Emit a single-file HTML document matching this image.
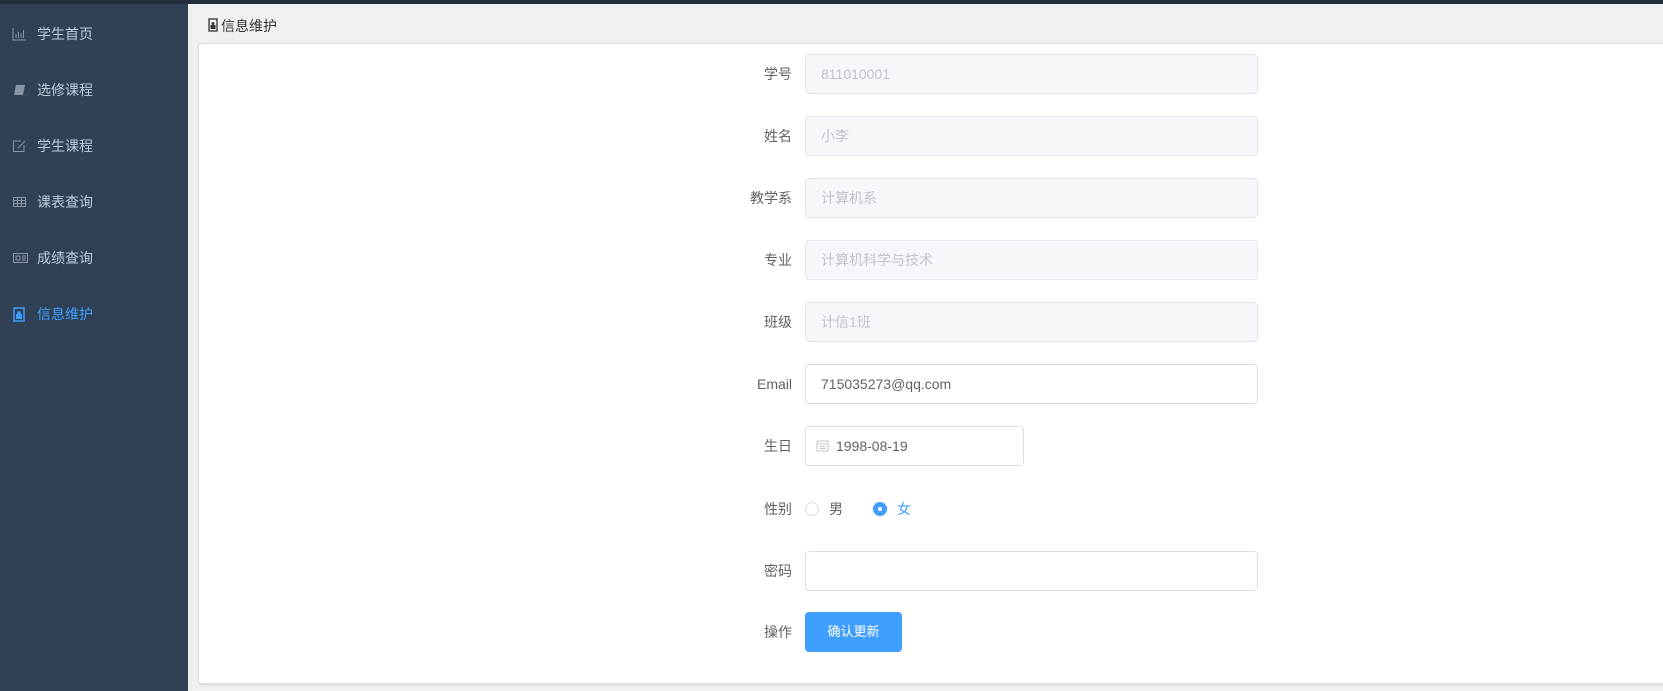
<!DOCTYPE html>
<html><head><meta charset="utf-8"><style>
*{box-sizing:border-box;margin:0;padding:0}
body{width:1663px;height:691px;overflow:hidden;background:#f0f0f0;font-family:"Liberation Sans","Noto Sans CJK SC",sans-serif;font-size:14px;color:#606266;position:relative}
.top{position:absolute;left:0;top:0;width:1663px;height:4px;background:#222d3d}
.side{position:absolute;left:0;top:4px;width:188px;height:687px;background:#304156}
.item{position:absolute;left:0;width:188px;height:20px;color:#bfcbd9;line-height:20px}
.item span{position:absolute;left:37px;top:0}
.item svg{position:absolute;left:12px;top:3px}
.item.act{color:#409eff}
.crumb{position:absolute;left:208px;top:16px;color:#333;font-size:14px}
.card{position:absolute;left:198px;top:43px;width:1480px;height:641px;background:#fff;border:1px solid #e0e0e0;border-radius:4px;box-shadow:0 1px 2px rgba(0,0,0,.08)}
.lab{position:absolute;width:100px;left:692px;text-align:right;line-height:40px}
.inp{position:absolute;left:805px;width:453px;height:40px;border:1px solid #dcdfe6;border-radius:4px;padding-left:15px;line-height:38px;color:#606266}
.dis{background:#f5f7fa;border-color:#e4e7ed;color:#c0c4cc}
.btn{position:absolute;left:805px;top:612px;width:97px;height:40px;background:#409eff;border-radius:4px;color:#fff;text-align:center;line-height:40px;font-size:13px}
</style></head><body>
<div class="top"></div>
<div class="side">
<div class="item" style="top:20px"><svg width="15" height="14" viewBox="0 0 15 14" fill="none" stroke="#8a94a3"><path d="M1 1V13H14M4 11V7M6.5 11V5M9 11V6M11.5 11V3"/></svg><span>学生首页</span></div>
<div class="item" style="top:76px"><svg width="15" height="14" viewBox="0 0 15 14"><path d="M4 2H13L11 12H2Z" fill="#8a94a3"/></svg><span>选修课程</span></div>
<div class="item" style="top:132px"><svg width="15" height="14" viewBox="0 0 15 14" fill="none" stroke="#8a94a3"><path d="M9 2H1.5V12.5H12V6M6 9L13 2"/></svg><span>学生课程</span></div>
<div class="item" style="top:188px"><svg width="15" height="14" viewBox="0 0 15 14" fill="none" stroke="#8a94a3"><path d="M1.5 2.5H13.5V11.5H1.5ZM1.5 5.5H13.5M1.5 8.5H13.5M5.5 2.5V11.5M9.5 2.5V11.5"/></svg><span>课表查询</span></div>
<div class="item" style="top:244px"><svg width="17" height="14" viewBox="0 0 17 14" fill="none" stroke="#8a94a3"><path d="M1.5 2.5H15.5V11.5H1.5ZM4 5H8V9H4ZM10 5H14M10 7H14M10 9H14"/></svg><span>成绩查询</span></div>
<div class="item act" style="top:300px"><svg width="15" height="15" viewBox="0 0 15 15"><rect x="2" y="1" width="10" height="13" fill="none" stroke="#409eff" stroke-width="1.5"/><rect x="4" y="7" width="6" height="5" fill="#409eff"/><circle cx="7" cy="6" r="1.8" fill="#409eff"/></svg><span>信息维护</span></div>
</div>
<svg style="position:absolute;left:208px;top:18px" width="10" height="14" viewBox="0 0 10 14"><rect x="1" y="1" width="8" height="12" fill="none" stroke="#333" stroke-width="1.3"/><rect x="2.5" y="7" width="5" height="4" fill="#333"/><circle cx="5" cy="5.5" r="1.5" fill="#333"/></svg>
<div class="crumb" style="left:221px">信息维护</div>
<div class="card"></div>
<div class="lab" style="top:54px">学号</div><div class="inp dis" style="top:54px">811010001</div>
<div class="lab" style="top:116px">姓名</div><div class="inp dis" style="top:116px">小李</div>
<div class="lab" style="top:178px">教学系</div><div class="inp dis" style="top:178px">计算机系</div>
<div class="lab" style="top:240px">专业</div><div class="inp dis" style="top:240px">计算机科学与技术</div>
<div class="lab" style="top:302px">班级</div><div class="inp dis" style="top:302px">计信1班</div>
<div class="lab" style="top:364px">Email</div><div class="inp" style="top:364px">715035273@qq.com</div>
<div class="lab" style="top:426px">生日</div><div class="inp" style="top:426px;width:219px;padding-left:30px">1998-08-19</div>
<svg style="position:absolute;left:816px;top:439px" width="13" height="13" viewBox="0 0 13 13" fill="none" stroke="#c0c4cc"><rect x="1" y="2" width="11" height="10"/><path d="M1 5H12M3.5 7.5H9.5M3.5 9.5H9.5"/></svg>
<div class="lab" style="top:489px">性别</div>
<div style="position:absolute;left:805px;top:502px;width:14px;height:14px;border:1px solid #dcdfe6;border-radius:50%"></div>
<div style="position:absolute;left:829px;top:489px;line-height:40px">男</div>
<div style="position:absolute;left:873px;top:502px;width:14px;height:14px;background:#409eff;border-radius:50%"><div style="position:absolute;left:5px;top:5px;width:4px;height:4px;background:#fff;border-radius:50%"></div></div>
<div style="position:absolute;left:897px;top:489px;line-height:40px;color:#409eff">女</div>
<div class="lab" style="top:551px">密码</div><div class="inp" style="top:551px"></div>
<div class="lab" style="top:612px">操作</div><div class="btn">确认更新</div>
</body></html>
